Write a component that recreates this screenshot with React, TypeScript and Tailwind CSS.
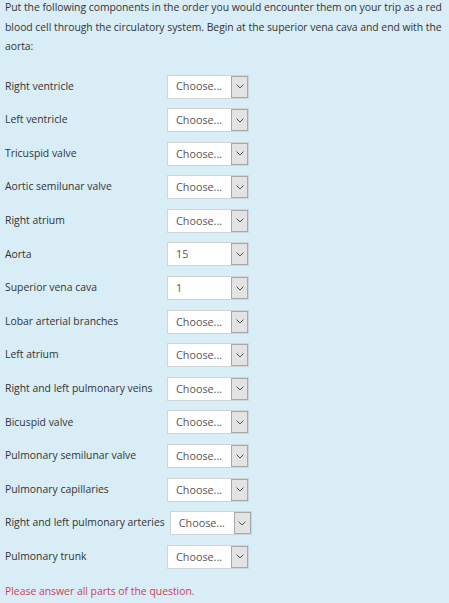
import React from "react";

const rows: { label: string; value: string }[] = [
  { label: "Right ventricle", value: "Choose..." },
  { label: "Left ventricle", value: "Choose..." },
  { label: "Tricuspid valve", value: "Choose..." },
  { label: "Aortic semilunar valve", value: "Choose..." },
  { label: "Right atrium", value: "Choose..." },
  { label: "Aorta", value: "15" },
  { label: "Superior vena cava", value: "1" },
  { label: "Lobar arterial branches", value: "Choose..." },
  { label: "Left atrium", value: "Choose..." },
  { label: "Right and left pulmonary veins", value: "Choose..." },
  { label: "Bicuspid valve", value: "Choose..." },
  { label: "Pulmonary semilunar valve", value: "Choose..." },
  { label: "Pulmonary capillaries", value: "Choose..." },
  { label: "Right and left pulmonary arteries", value: "Choose..." },
  { label: "Pulmonary trunk", value: "Choose..." },
];

function FakeSelect({ value }: { value: string }) {
  return (
    <div className="flex h-[24px] w-[82px] shrink-0 border border-[#cfd4d8] bg-white">
      <div className="flex flex-1 items-center pl-[8px] text-[10.8px] text-[#555]">{value}</div>
      <div className="flex w-[17px] items-center justify-center border border-[#a8a8a8] bg-[#e3e3e3]">
        <svg width="8" height="5" viewBox="0 0 8 5" fill="none">
          <path d="M0.5 0.5 L4 4 L7.5 0.5" stroke="#555" strokeWidth="1" />
        </svg>
      </div>
    </div>
  );
}

export default function App() {
  return (
    <div
      className="min-h-[603px] w-[449px] overflow-hidden bg-[#d9edf7] px-[5px] text-[#333]"
      style={{ fontFamily: '"Open Sans", "Liberation Sans", sans-serif' }}
    >
      <p className="-mt-[2px] -mr-[6px] text-[10.4px] leading-[19.5px] tracking-[-0.03px]">
        Put the following components in the order you would encounter them on your trip as a red blood cell
        through the circulatory system. Begin at the superior vena cava and end with the aorta:
      </p>

      <div className="mt-[18px] flex flex-col gap-[9.6px]">
        {rows.map((r) => (
          <div key={r.label} className="flex items-center gap-[5px]">
            <div className="min-w-[157px] whitespace-nowrap text-[10.4px]">{r.label}</div>
            <FakeSelect value={r.value} />
          </div>
        ))}
      </div>

      <p className="mt-[15px] text-[10.4px] text-[#ca3f55]">Please answer all parts of the question.</p>
    </div>
  );
}
